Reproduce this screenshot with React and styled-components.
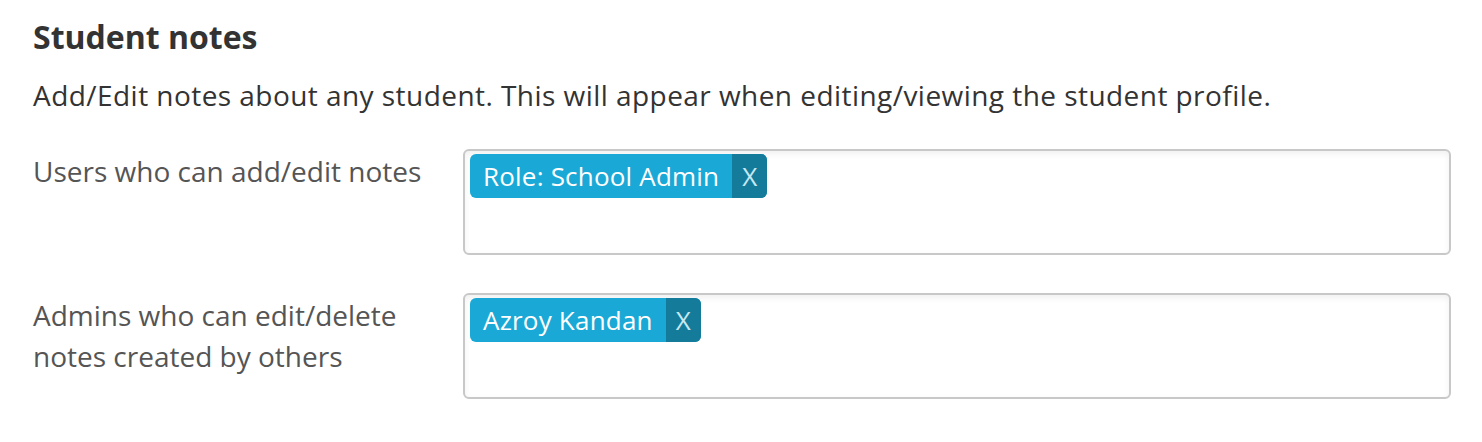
import React from "react";
import styled, { createGlobalStyle } from "styled-components";

const Global = createGlobalStyle`
  html, body { margin: 0; padding: 0; background: #fff; }
  body { font-family: "Open Sans", "Noto Sans", sans-serif; -webkit-font-smoothing: antialiased; }
`;

const Page = styled.div`
  padding: 17px 31px 0 33px;
`;

const Title = styled.h2`
  margin: 0;
  font-size: 32px;
  line-height: 40px;
  font-weight: 700;
  color: #333;
`;

const Description = styled.p`
  margin: 20px 0 0;
  font-size: 28px;
  line-height: 36px;
  letter-spacing: 0.45px;
  color: #333;
`;

const Form = styled.div`
  margin-top: 36px;
  display: flex;
  flex-direction: column;
  gap: 38px;
`;

const Row = styled.div`
  display: grid;
  grid-template-columns: 430px 988px;
  align-items: start;
`;

const Label = styled.div`
  max-width: 400px;
  font-size: 28px;
  line-height: 41px;
  color: #555;
  padding-top: 2px;
`;

const TagBox = styled.div`
  box-sizing: border-box;
  height: 106px;
  border: 2px solid #c8c8c8;
  border-radius: 6px;
  background: #fff;
  box-shadow: inset 0 3px 6px rgba(0, 0, 0, 0.06);
  padding: 3px 5px;
  display: flex;
  flex-wrap: wrap;
  align-items: flex-start;
  gap: 6px;
`;

const Tag = styled.span`
  display: inline-flex;
  height: 44px;
  border-radius: 6px;
  overflow: hidden;
  background: #1aa9d6;
  color: #fff;
  font-size: 26px;
  font-weight: 500;
`;

const TagText = styled.span`
  display: flex;
  align-items: center;
  padding: 0 13px;
  letter-spacing: 0.2px;
`;

const TagRemove = styled.span`
  display: flex;
  align-items: center;
  justify-content: center;
  width: 35px;
  background: #147c9a;
  color: #c6e9f4;
  font-size: 26px;
`;

const fields = [
  { label: "Users who can add/edit notes", tags: ["Role: School Admin"] },
  { label: "Admins who can edit/delete notes created by others", tags: ["Azroy Kandan"] },
];

export default function App() {
  return (
    <>
      <Global />
      <Page>
        <Title>Student notes</Title>
        <Description>
          Add/Edit notes about any student. This will appear when editing/viewing the student profile.
        </Description>
        <Form>
          {fields.map((f) => (
            <Row key={f.label}>
              <Label>{f.label}</Label>
              <TagBox>
                {f.tags.map((t) => (
                  <Tag key={t}>
                    <TagText>{t}</TagText>
                    <TagRemove>X</TagRemove>
                  </Tag>
                ))}
              </TagBox>
            </Row>
          ))}
        </Form>
      </Page>
    </>
  );
}
